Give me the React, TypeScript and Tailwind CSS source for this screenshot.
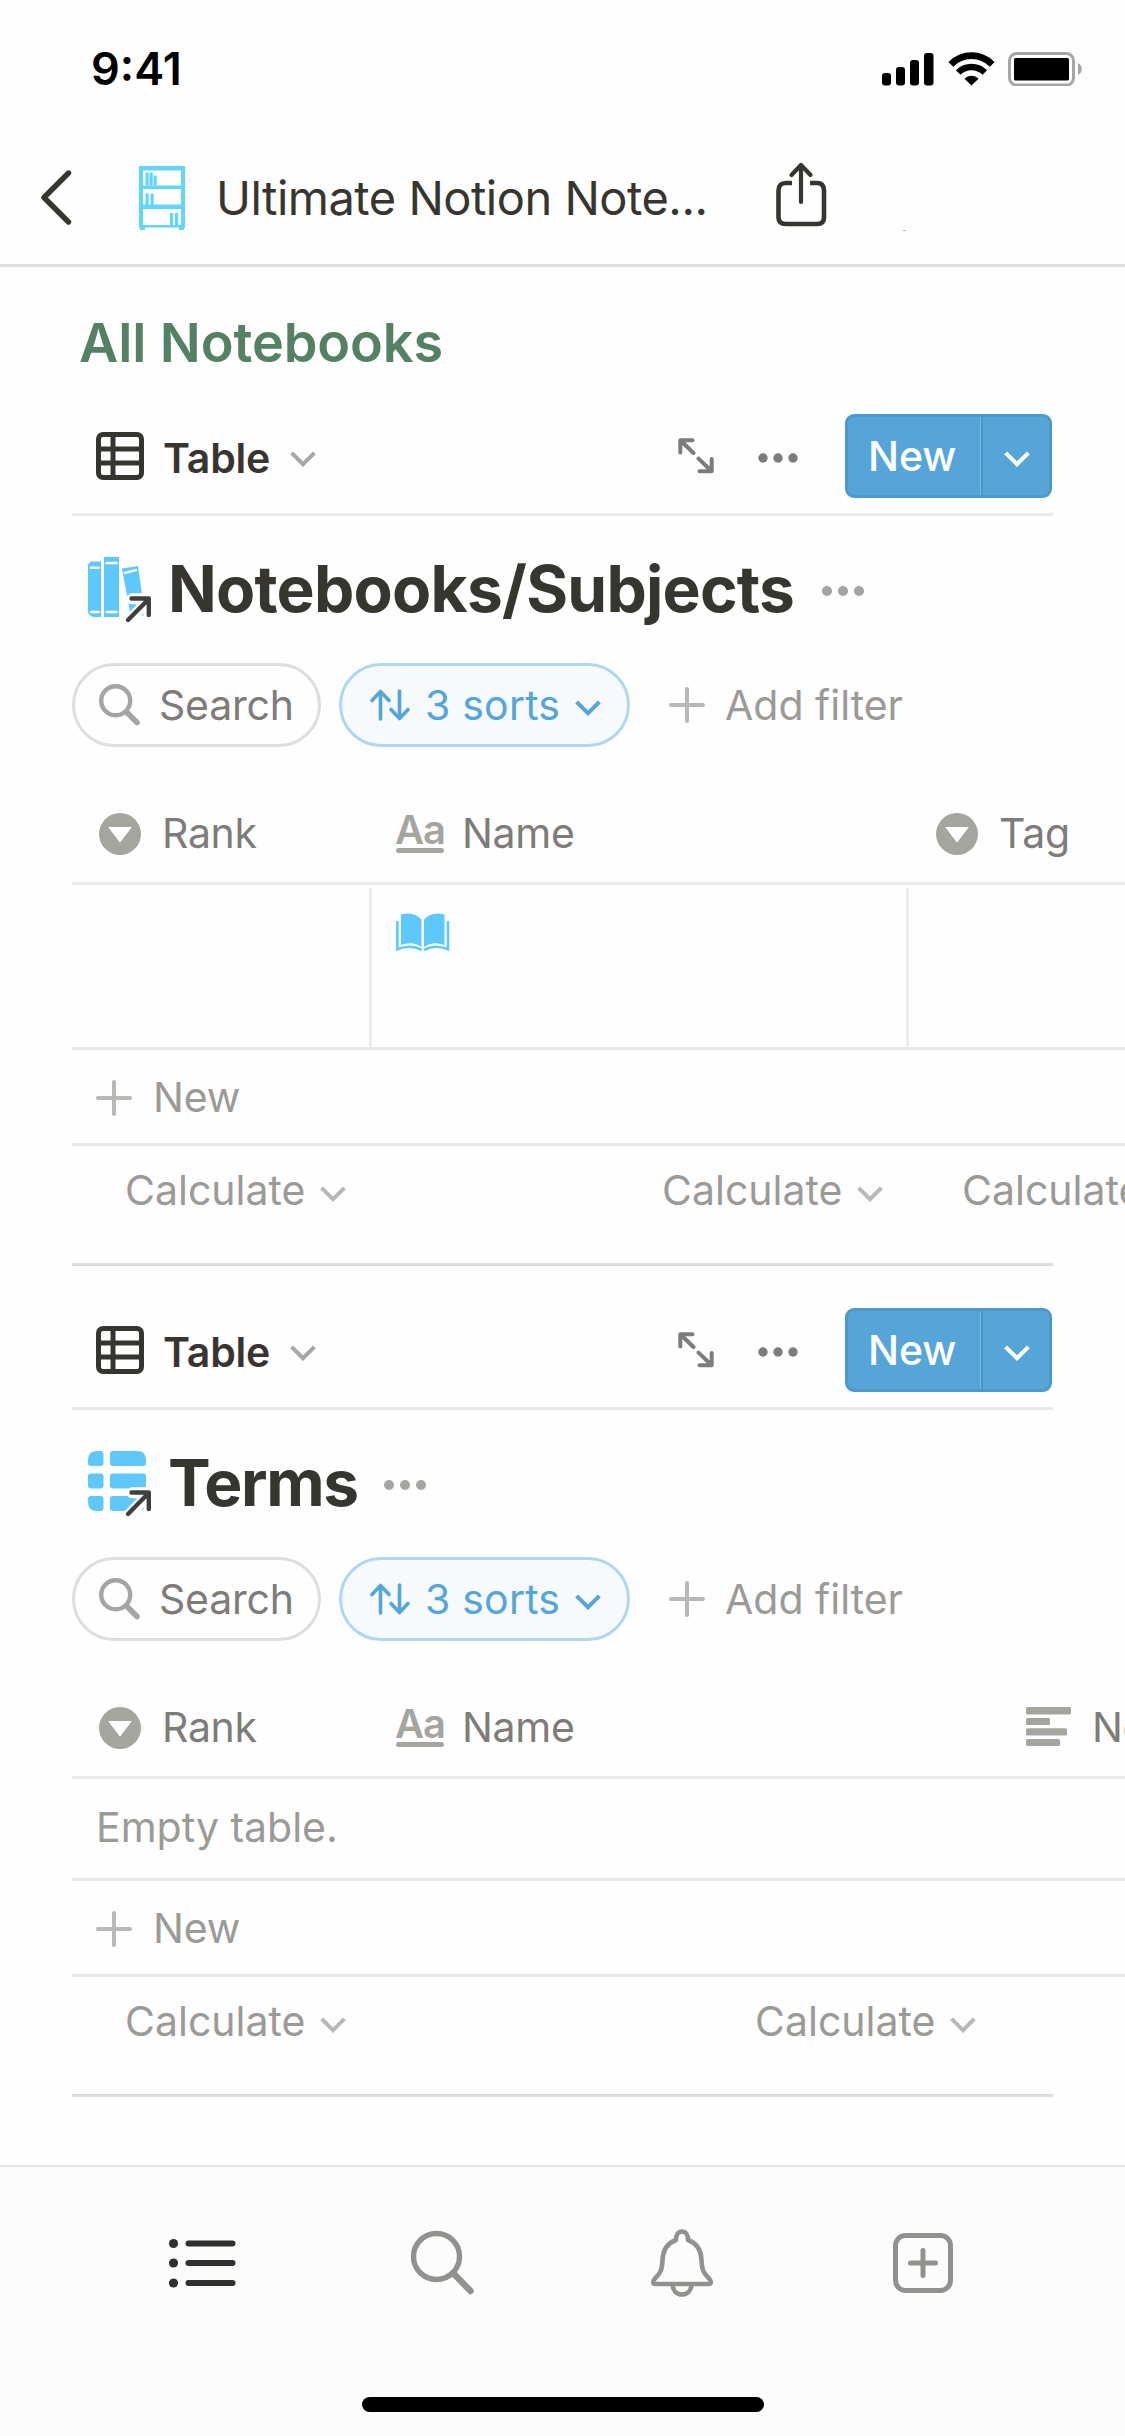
import React from 'react';
import clsx from 'clsx';

/* ---------- Icons ---------- */

const ChevronDown = ({ className }: { className?: string }) => (
  <svg width="26" height="16" viewBox="0 0 26 16" fill="none" className={clsx('shrink-0', className)}>
    <path d="M1.6 1.8 13 13.2 24.4 1.8" stroke="currentColor" strokeWidth="4" />
  </svg>
);

const Dots = ({ className, wide }: { className?: string; wide?: boolean }) => (
  <svg
    width={wide ? 42 : 40}
    height="10"
    viewBox={wide ? '0 0 42 10' : '0 0 40 10'}
    fill="currentColor"
    className={clsx('shrink-0', className)}
  >
    <circle cx="5" cy="5" r={wide ? 5 : 4.7} />
    <circle cx={wide ? 21 : 20} cy="5" r={wide ? 5 : 4.7} />
    <circle cx={wide ? 37 : 35} cy="5" r={wide ? 5 : 4.7} />
  </svg>
);

const Plus = () => (
  <svg width="36" height="36" viewBox="0 0 36 36" fill="none" className="shrink-0 text-[#b9b8b5]">
    <path d="M18 2v32M2 18h32" stroke="currentColor" strokeWidth="4" strokeLinecap="round" />
  </svg>
);

const TableIcon = () => (
  <svg width="48" height="48" viewBox="0 0 48 48" fill="none" className="shrink-0">
    <rect x="2.5" y="2.5" width="43" height="43" rx="4.5" stroke="currentColor" strokeWidth="5" />
    <path d="M17 3v42M3 17h42M3 31h42" stroke="currentColor" strokeWidth="5" />
  </svg>
);

const ExpandIcon = () => (
  <svg width="36" height="36" viewBox="0 0 36 36" fill="none" className="shrink-0 text-[#7d7c78]">
    <path
      d="M14.5 2.3H2.3v12.2M2.8 2.8 15.5 15M21.5 33.3h12.2V21.1M33.2 32.8 20.5 20.6"
      stroke="currentColor"
      strokeWidth="4"
      strokeLinecap="round"
      strokeLinejoin="round"
    />
  </svg>
);

const SearchIcon = () => (
  <svg width="42" height="42" viewBox="0 0 42 42" fill="none" className="shrink-0 text-[#a5a4a0]">
    <circle cx="16.7" cy="16.7" r="14.5" stroke="currentColor" strokeWidth="4.4" />
    <path d="m28 28.5 10 10" stroke="currentColor" strokeWidth="5.6" strokeLinecap="round" />
  </svg>
);

const SortIcon = () => (
  <svg width="40" height="32" viewBox="0 0 40 32" fill="none" className="shrink-0">
    <path
      d="M10.5 30V2.5M2 11.5l8.5-9 8.5 9M29.5 2v27.5M21 20.5l8.5 9 8.5-9"
      stroke="currentColor"
      strokeWidth="3.6"
      strokeLinecap="round"
      strokeLinejoin="round"
    />
  </svg>
);

const SelectIcon = () => (
  <svg width="42" height="42" viewBox="0 0 42 42" className="shrink-0">
    <circle cx="21" cy="21" r="21" fill="#a5a5a0" />
    <path d="M10 14.5h22L21 29Z" fill="#fff" stroke="#fff" strokeWidth="1" strokeLinejoin="round" />
  </svg>
);

const TitleIcon = () => (
  <span className="flex h-[42px] w-12 shrink-0 flex-col items-start text-[#a5a5a0]">
    <span className="-ml-px h-[35px] text-[40px] leading-[34px] font-semibold tracking-[-1px]">Aa</span>
    <span className="h-[5px] w-12 rounded-full bg-[#a5a5a0]" />
  </span>
);

const TextIcon = () => (
  <svg width="45" height="42" viewBox="0 0 45 42" fill="#a5a5a0" className="shrink-0">
    <rect y="0" width="45" height="7.4" rx="1.5" />
    <rect y="11" width="24" height="7" rx="1.5" />
    <rect y="21.3" width="41" height="7.2" rx="1.5" />
    <rect y="32" width="34" height="7" rx="1.5" />
  </svg>
);

const ShelfIcon = () => (
  <svg width="46" height="64" viewBox="0 0 46 64" fill="none" className="shrink-0">
    <g fill="#62d5fe">
      <path
        d="M0 0h46v62h-1v2h-5v-2.500H6V64H1v-2H0ZM4 4.500v15h38v-15Zm0 18.500v15.500h38V23Zm0 20V59h38V43Z"
        fillRule="evenodd"
      />
      <path d="M6.500 6.500h3.200V19.500H6.500ZM10.500 6.500h3.200V19.500h-3.200ZM14.500 9.500h3.200v10h-3.200ZM6.500 27.500h3.200v12H6.500ZM11.500 27.500h3.200v12h-3.200ZM31 47h3.200v12H31ZM36 47h3.200v12H36Z" />
    </g>
  </svg>
);

const LinkArrow = () => (
  <>
    <path d="M41 63.500 61 43M44 41.800h17.200v17" stroke="#fff" strokeWidth="11" strokeLinecap="round" strokeLinejoin="round" />
    <path d="M40 63 60.500 42.300M43.500 41.500h17.300v16.500" stroke="#3f3f3d" strokeWidth="4.400" strokeLinecap="round" strokeLinejoin="round" />
  </>
);

const BooksIcon = () => (
  <svg width="66" height="67" viewBox="0 0 66 67" fill="none" className="shrink-0">
    <path d="M3 4.500h10V60H7C3 60 0 57.500 0 54V7.500Z" fill="#5ec8fb" />
    <rect x="16" y="0" width="15" height="60" fill="#5ec8fb" />
    <path d="m34 11.500 16-2.500L57 58l-14 2Z" fill="#5ec8fb" />
    <path
      d="M3 10.800h7.500M3 55h7.500M18.500 6h10M18.500 55h10M37 15.800l11-2.600"
      stroke="#fff"
      strokeWidth="2.400"
      strokeLinecap="round"
    />
    <LinkArrow />
  </svg>
);

const TermsIcon = () => (
  <svg width="66" height="67" viewBox="0 0 66 67" fill="none" className="shrink-0">
    <g fill="#5ec8fb">
      <path d="M9 0h3.500Q15.500 0 15.500 3v9q0 3-3 3H3q-3 0-3-3V9Q0 0 9 0ZM25 0h24q9 0 9 9v3q0 3-3 3H25q-3 0-3-3V3q0-3 3-3Z" />
      <rect x="0" y="22.500" width="15.500" height="15" rx="3" />
      <rect x="22" y="22.500" width="36" height="15" rx="3" />
      <path d="M3 45h9.500q3 0 3 3v9q0 3-3 3H9Q0 60 0 51v-3q0-3 3-3ZM25 45h33v6q0 9-9 9H25q-3 0-3-3v-9q0-3 3-3Z" />
    </g>
    <LinkArrow />
  </svg>
);

const BookIcon = () => (
  <svg width="54" height="38" viewBox="0 0 54 38" fill="none" className="shrink-0">
    <path d="M5 1.500q13-3.500 20.500 5v27.500Q17 27.500 5 32ZM28 6.500q8-8.500 20.500-5v30.500Q37 27.500 28 34Z" fill="#5ec8fb" />
    <path d="M1.400 8v28.300Q15 31 25.800 37M52 8v28.300Q39 31 28 37" stroke="#5ec8fb" strokeWidth="2.600" />
  </svg>
);

/* ---------- Header ---------- */

const StatusBar = () => (
  <div className="flex h-[132px] items-start justify-between pt-[51px] pr-[43px] pl-[91px] text-black">
    <span className="text-[45px] leading-[36px] font-semibold">9:41</span>
    <div className="flex items-start pt-px">
      <svg width="52" height="34" viewBox="0 0 52 34">
        <rect x="0" y="21" width="9" height="12.500" rx="3" />
        <rect x="14" y="15" width="9" height="18.500" rx="3" />
        <rect x="28" y="8" width="9" height="25.500" rx="3" />
        <rect x="42" y="1" width="9.500" height="32.500" rx="3" />
      </svg>
      <svg width="48" height="34" viewBox="0 0 48 34" fill="none" className="ml-[14px]">
        <path d="M2.800 12.300C14.500.7 32.500.7 44.200 12.300" stroke="#000" strokeWidth="6.800" />
        <path d="M10.200 20.500c7.500-7.300 19.100-7.300 26.600 0" stroke="#000" strokeWidth="6.600" />
        <path d="M16.500 26.800c3.800-4 10.200-4 14 0l-7 6.700Z" fill="#000" />
      </svg>
      <svg width="74" height="34" viewBox="0 0 74 34" fill="none" className="ml-3">
        <rect x="1.500" y="1.500" width="64" height="31.500" rx="7" stroke="#a6a6a6" strokeWidth="3" />
        <rect x="6" y="6" width="55" height="22.500" rx="1.500" fill="#000" />
        <path d="M70 11v12c5-2 5-10 0-12Z" fill="#a6a6a6" />
      </svg>
    </div>
  </div>
);

const PageHeader = () => (
  <header className="flex h-[135px] items-start border-b-3 border-[#dddddd] pl-10">
    <svg width="32" height="56" viewBox="0 0 32 56" fill="none" className="mt-[37px] shrink-0">
      <path d="M28.500 4 4 28.500 28.500 53" stroke="currentColor" strokeWidth="5.400" strokeLinecap="round" strokeLinejoin="round" />
    </svg>
    <div className="mt-[34px] ml-[67px]">
      <ShelfIcon />
    </div>
    <h1 className="mt-[36px] ml-[31px] w-[500px] text-[47px] leading-[60px] tracking-[-0.5px] whitespace-nowrap">
      Ultimate Notion Note...
    </h1>
    <svg width="52" height="66" viewBox="0 0 52 66" fill="none" className="mt-[30px] ml-[60px] shrink-0">
      <path
        d="M16 21H10q-7.500 0-7.500 7.500v27Q2.500 62 10 62h31Q48 62 48 55.500v-27Q48 21 41 21H34"
        stroke="currentColor"
        strokeWidth="4.600"
      />
      <path d="M25 40V3.500M15.500 13l9.500-10 9.500 10" stroke="currentColor" strokeWidth="4.200" strokeLinecap="round" strokeLinejoin="round" />
    </svg>
    <span className="mt-[98px] ml-[75px] h-px w-[3px] bg-[#b5b5b5]" />
  </header>
);

/* ---------- Database view ---------- */

const Toolbar = () => (
  <div className="mr-[72px] flex h-[102px] items-start border-b-3 border-[#e9e9e9]">
    <div className="flex h-[84px] items-center pl-6">
      <TableIcon />
      <span className="mt-1 ml-[19px] w-[108px] text-[41px] leading-[48px] font-semibold tracking-[-0.2px]">Table</span>
      <ChevronDown className="mt-[5px] ml-[19px] text-[#a8a7a3]" />
    </div>
    <div className="ml-auto flex h-[84px] items-center">
      <ExpandIcon />
      <Dots className="mt-[3px] ml-[44px] text-[#7d7c78]" />
      <div className="ml-[47px] flex h-[84px] w-[207px] overflow-hidden rounded-[9px] border-3 border-[#4d9aca] bg-[#56a5d8] text-white">
        <span className="flex w-[133px] items-center border-r border-[#7fb9e0] pb-px pl-5 text-[41px] leading-[48px] font-medium tracking-[-0.1px]">
          New
        </span>
        <span className="flex flex-1 items-center justify-center border-l-2 border-[#4b93c2] pt-[5px] pl-px">
          <ChevronDown />
        </span>
      </div>
      <span className="w-px" />
    </div>
  </div>
);

interface DatabaseTitleProps {
  icon: React.ReactNode;
  title: string;
  titleClass: string;
}

const DatabaseTitle: React.FC<DatabaseTitleProps> = ({ icon, title, titleClass }) => (
  <div className="flex h-[147px] items-center pl-4">
    <div className="mt-0.5">{icon}</div>
    <h2 className={clsx('-mt-0.5 ml-[14px] text-[64px] leading-[78px] font-bold whitespace-nowrap', titleClass)}>
      {title}
    </h2>
    <Dots wide className="mt-[3px] text-[#a5a4a0]" />
  </div>
);

const Filters = () => (
  <div className="flex h-[84px] items-center text-[41px] leading-[48px]">
    <div className="flex h-[84px] w-[249px] items-center rounded-full border-3 border-[#dededd] pl-6 text-[#7d7c78]">
      <SearchIcon />
      <span className="-mt-px ml-[18px] tracking-[-0.2px]">Search</span>
    </div>
    <div className="ml-[18px] flex h-[84px] w-[291px] items-center rounded-full border-3 border-[#afd8ee] bg-[#f6fafd] pl-7 text-[#56a5d8]">
      <SortIcon />
      <span className="-mt-px ml-[15px] w-[136px] tracking-[0.2px] whitespace-nowrap">3 sorts</span>
      <ChevronDown className="mt-[5px] ml-[14px]" />
    </div>
    <div className="ml-[39px] flex items-center text-[#9b9a96]">
      <Plus />
      <span className="ml-5 whitespace-nowrap">Add filter</span>
    </div>
  </div>
);

interface Column {
  name: string;
  type: 'select' | 'title' | 'text';
  cellClass: string;
}

const columnIcons = {
  select: <SelectIcon />,
  title: <TitleIcon />,
  text: <TextIcon />,
};

const columnSpacing = {
  select: 'pl-[27px] gap-[21px]',
  title: 'pl-6 gap-[18px]',
  text: 'pl-6 gap-[21px]',
};

const ColumnHeaders = ({ columns }: { columns: Column[] }) => (
  <div className="flex h-[138px] border-b-3 border-[#e9e9e7] pt-[39px] text-[41px] leading-[48px] tracking-[-0.3px] text-[#7d7c78]">
    {columns.map((col) => (
      <div key={col.name} className={clsx('flex shrink-0 items-center', col.cellClass, columnSpacing[col.type])}>
        {columnIcons[col.type]}
        <span className="-mt-[3px]">{col.name}</span>
      </div>
    ))}
  </div>
);

const NewRow = () => (
  <div className="flex h-[96px] items-center border-b-3 border-[#e9e9e9] pl-6 text-[41px] leading-[48px] text-[#9b9a96]">
    <span className="mt-[3px]">
      <Plus />
    </span>
    <span className="ml-[21px] tracking-[-0.2px]">New</span>
  </div>
);

const CalculateRow = ({ columns }: { columns: Column[] }) => (
  <div className="flex h-[117px] text-[41px] leading-[48px] text-[#9b9a96]">
    {columns.map((col) => (
      <div key={col.name} className={clsx('flex h-[88px] shrink-0 items-center justify-end pr-[26px]', col.cellClass)}>
        {col.type !== 'text' && (
          <>
            <span className="w-[181px]">Calculate</span>
            <ChevronDown className="mt-[7px] ml-[14px] text-[#b9b8b5]" />
          </>
        )}
      </div>
    ))}
  </div>
);

interface DatabaseProps extends DatabaseTitleProps {
  columns: Column[];
  children: React.ReactNode;
}

const Database: React.FC<DatabaseProps> = ({ icon, title, titleClass, columns, children }) => (
  <section className="overflow-hidden pl-[72px]">
    <Toolbar />
    <DatabaseTitle icon={icon} title={title} titleClass={titleClass} />
    <Filters />
    <ColumnHeaders columns={columns} />
    {children}
    <NewRow />
    <CalculateRow columns={columns} />
    <div className="mr-[72px] h-[3px] bg-[#dddddc]" />
  </section>
);

/* ---------- Bottom navigation ---------- */

const TabBar = () => (
  <nav className="mt-auto h-[271px] border-t-2 border-[#e4e4e4] bg-[#fcfcfc]">
    <div className="flex h-[191px] items-center pl-[168px] text-[#91918d]">
      <svg width="68" height="68" viewBox="0 0 68 68" className="text-[#32302c]">
        <g fill="currentColor">
          <circle cx="5.500" cy="14.500" r="4.600" />
          <circle cx="5.500" cy="34" r="4.600" />
          <circle cx="5.500" cy="54" r="4.600" />
          <rect x="17.500" y="11.500" width="50" height="6" rx="3" />
          <rect x="17.500" y="31" width="50" height="6" rx="3" />
          <rect x="17.500" y="51" width="50" height="6" rx="3" />
        </g>
      </svg>
      <svg width="66" height="66" viewBox="0 0 66 66" fill="none" className="ml-[174px]">
        <circle cx="26.500" cy="26.500" r="23" stroke="currentColor" strokeWidth="5.400" />
        <path d="m44.500 44.500 16 16.500" stroke="currentColor" strokeWidth="6.400" strokeLinecap="round" />
      </svg>
      <svg width="64" height="68" viewBox="0 0 64 68" fill="none" className="ml-[174px]">
        <path
          d="M26 11C26 5.500 28.500 2.500 32 2.500S38 5.500 38 11C46.500 14 51 21 51.500 31 52 43 54.500 44.500 59 49.500 62 53 61 55 58.500 55H5.500C3 55 2 53 5 49.500 9.500 44.500 12 43 12.500 31 13 21 17.500 14 26 11Z"
          stroke="currentColor"
          strokeWidth="4.600"
          strokeLinejoin="round"
        />
        <path d="M22.500 56c.5 6 4.500 9.500 9.500 9.500s9-3.500 9.500-9.500" stroke="currentColor" strokeWidth="4.600" />
      </svg>
      <svg width="60" height="60" viewBox="0 0 60 60" fill="none" className="ml-[179px]">
        <rect x="2.500" y="2.500" width="55" height="55" rx="10" stroke="currentColor" strokeWidth="5" />
        <path d="M30 17.500v25M17.500 30h25" stroke="currentColor" strokeWidth="5" strokeLinecap="round" />
      </svg>
    </div>
    <div className="mx-auto mt-[39px] h-[15px] w-[402px] rounded-full bg-black" />
  </nav>
);

const notebookColumns: Column[] = [
  { name: 'Rank', type: 'select', cellClass: 'w-[300px]' },
  { name: 'Name', type: 'title', cellClass: 'w-[537px]' },
  { name: 'Tag', type: 'select', cellClass: 'w-[300px]' },
];

const termColumns: Column[] = [
  { name: 'Rank', type: 'select', cellClass: 'w-[300px]' },
  { name: 'Name', type: 'title', cellClass: 'w-[630px]' },
  { name: 'Notes', type: 'text', cellClass: 'w-[300px]' },
];

export default function App() {
  return (
    <div className="flex h-[2436px] w-[1125px] flex-col overflow-hidden bg-[#fefefe] font-[Inter,'Liberation_Sans',sans-serif] text-[#37352f]">
      <StatusBar />
      <PageHeader />

      <h2 className="h-[147px] pt-[44px] pl-[79px] text-[54px] leading-[64px] font-semibold tracking-[-0.1px] text-[#548164]">
        All Notebooks
      </h2>

      <Database
        icon={<BooksIcon />}
        title="Notebooks/Subjects"
        titleClass="w-[654px] tracking-[-0.75px]"
        columns={notebookColumns}
      >
        <div className="flex h-[165px] border-b-3 border-[#e9e9e7] pt-[3px]">
          <div className="w-[300px] shrink-0 border-r-3 border-[#ededec]" />
          <div className="w-[537px] shrink-0 border-r-3 border-[#ededec] pt-[25px] pl-6">
            <BookIcon />
          </div>
        </div>
      </Database>

      <div className="h-[42px] shrink-0" />

      <Database
        icon={<TermsIcon />}
        title="Terms"
        titleClass="w-[216px] tracking-[-1.4px]"
        columns={termColumns}
      >
        <div className="flex h-[102px] items-center border-b-3 border-[#e9e9e9] pb-[3px] pl-6 text-[41px] leading-[48px] text-[#9b9a96]">
          Empty table.
        </div>
      </Database>

      <TabBar />
    </div>
  );
}
